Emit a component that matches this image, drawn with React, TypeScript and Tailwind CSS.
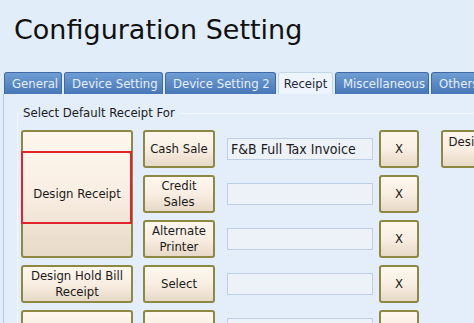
import React from 'react';

// Configuration Setting - Receipt tab

const tabs = [
  { label: 'General', w: 'w-[58px]' },
  { label: 'Device Setting', w: 'w-[99px]' },
  { label: 'Device Setting 2', w: 'w-[111px]' },
  { label: 'Receipt', w: 'w-[55px]', active: true },
  { label: 'Miscellaneous', w: 'w-[94px]' },
  { label: 'Others', w: 'w-[70px]' },
];

const btn =
  'flex items-center justify-center text-center leading-[16px] text-[#1a1a1a] border-2 border-[#8d8842] rounded-[3px] bg-gradient-to-b from-[#fef7ee] via-[#f9eee2] to-[#e7d9c7] px-[2px]';

const input =
  'self-center h-[22px] border border-[#bccfe6] bg-[#edf2f9] px-[3px] flex items-center text-[14px] text-[#1a1a1a] whitespace-nowrap';

const rows = [
  { label: 'Cash Sale', value: 'F&B Full Tax Invoice' },
  { label: 'Credit Sales', value: '' },
  { label: 'Alternate Printer', value: '' },
  { label: 'Select', value: '' },
  { label: '', value: '' },
];

export default function App() {
  return (
    <div
      className="w-[474px] h-[323px] overflow-hidden bg-[#e2edfa]"
      style={{ fontFamily: '"DejaVu Sans Condensed", "DejaVu Sans", sans-serif' }}
    >
      <h1
        className="h-[72px] pl-[14px] pt-[12px] text-[27px] leading-[36px] text-[#111] font-normal"
        style={{ fontFamily: '"DejaVu Sans", sans-serif' }}
      >
        Configuration Setting
      </h1>

      {/* Tabs */}
      <div className="flex items-end gap-[2px] pl-[4px] h-[22px] text-[13px] whitespace-nowrap">
        {tabs.map((t) => (
          <div
            key={t.label}
            className={
              t.w +
              ' shrink-0 h-[22px] rounded-t-[3px] border border-b-0 flex items-center ' +
              (t.active
                ? 'bg-[#eef4fc] border-[#c3d6ee] text-[#1c2636] justify-center'
                : 'pl-[7px] bg-gradient-to-b from-[#6f9dd3] to-[#4777b7] border-[#3f6aa6] text-[#e6eef9]')
            }
          >
            {t.label}
          </div>
        ))}
      </div>

      {/* Panel */}
      <div className="ml-[3px] h-[229px] border-l border-[#b3cbe9] bg-[#e4eefb] pl-[13px] pt-[11px] text-[13px]">
        <div className="flex items-center h-[16px]">
          <div className="w-[5px] h-px bg-[#f2f7fd]" />
          <span className="px-[1px] text-[#1a1a1a]">Select Default Receipt For</span>
          <div className="flex-1 h-px ml-[4px] bg-[#f2f7fd]" />
        </div>
        <div className="border-l border-[#f2f7fd] -mt-[8px] pt-[17px] pl-[3px]">
          <div className="grid grid-cols-[112px_82px_158px_46px_126px] grid-rows-[38px_38px_38px_38px_38px] gap-y-[7px] w-[524px]">
            <button className={btn + ' relative row-start-1 row-span-3 col-start-1'}>
              <span className="absolute left-[-2px] right-[-1px] top-[19px] h-[73px] border-2 border-[#e0242a]" />
              <span className="relative">Design Receipt</span>
            </button>
            <button className={btn + ' row-start-4 col-start-1'}>Design Hold Bill Receipt</button>
            <button className={btn + ' row-start-5 col-start-1'} />

            {rows.map((r, i) => (
              <React.Fragment key={i}>
                <button className={btn + ' ml-[10px]'} style={{ gridRow: i + 1, gridColumn: 2 }}>
                  {r.label}
                </button>
                <div className={input + ' ml-[12px]'} style={{ gridRow: i + 1, gridColumn: 3 }}>
                  {r.value}
                </div>
                <button className={btn + ' ml-[6px]'} style={{ gridRow: i + 1, gridColumn: 4 }}>
                  {i < 4 ? 'X' : ''}
                </button>
              </React.Fragment>
            ))}

            <button className={btn + ' ml-[22px] items-start pt-[2px] row-start-1 col-start-5'}>
              Design Deposit Slip
            </button>
          </div>
        </div>
      </div>
    </div>
  );
}
